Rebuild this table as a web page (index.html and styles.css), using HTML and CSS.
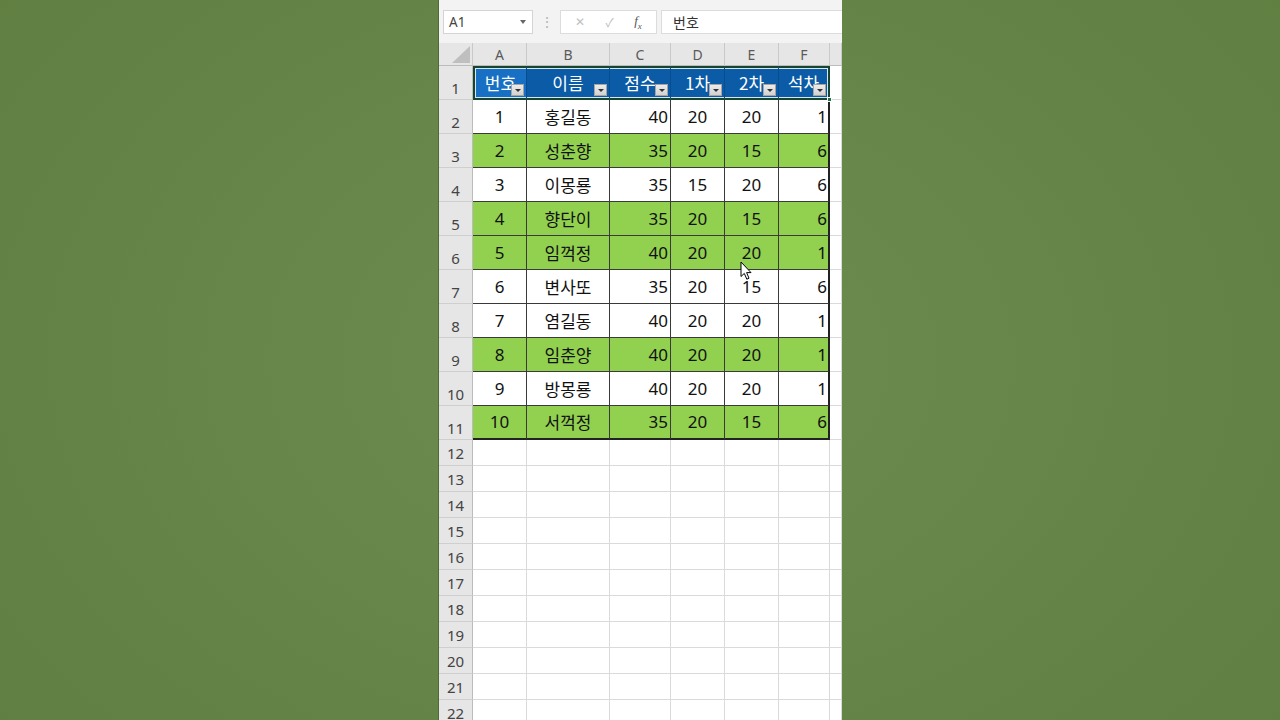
FILE: index.html
```html
<!DOCTYPE html>
<html lang="ko">
<head>
<meta charset="utf-8">
<title>Excel</title>
<link rel="stylesheet" href="styles.css">
</head>
<body>
<div class="panel">
  <div class="fbar">
    <div class="namebox"><span>A1</span><span class="nb-arrow"></span></div>
    <div class="vdots">⋮</div>
    <div class="fbtns">
      <span class="fb-x">✕</span>
      <span class="fb-ok">✓</span>
      <span class="fb-fx"><i>f</i><sub>x</sub></span>
    </div>
    <div class="finput">번호</div>
  </div>
  <div class="sheet">
    <table class="grid">
      <colgroup>
        <col class="w-rh"><col class="w-a"><col class="w-b"><col class="w-c"><col class="w-d"><col class="w-e"><col class="w-f"><col class="w-x">
      </colgroup>
      <thead>
        <tr class="r-colhead">
          <th class="corner"><span class="tri"></span></th>
          <th>A</th><th>B</th><th>C</th><th>D</th><th>E</th><th>F</th><th></th>
        </tr>
      </thead>
      <tbody>
        <tr class="r-big">
          <th class="rh">1</th>
          <td class="hd first act">번호<span class="flt"></span></td>
          <td class="hd">이름<span class="flt"></span></td>
          <td class="hd">점수<span class="flt"></span></td>
          <td class="hd">1차<span class="flt"></span></td>
          <td class="hd">2차<span class="flt"></span></td>
          <td class="hd last">석차<span class="flt"></span><span class="handle"></span></td>
          <td class="x"></td>
        </tr>
        <tr class="r-big">
          <th class="rh">2</th>
          <td class="d c">1</td><td class="d c">홍길동</td><td class="d r">40</td><td class="d c">20</td><td class="d c">20</td><td class="d r end">1</td><td class="x"></td>
        </tr>
        <tr class="r-big grn">
          <th class="rh">3</th>
          <td class="d c">2</td><td class="d c">성춘향</td><td class="d r">35</td><td class="d c">20</td><td class="d c">15</td><td class="d r end">6</td><td class="x"></td>
        </tr>
        <tr class="r-big">
          <th class="rh">4</th>
          <td class="d c">3</td><td class="d c">이몽룡</td><td class="d r">35</td><td class="d c">15</td><td class="d c">20</td><td class="d r end">6</td><td class="x"></td>
        </tr>
        <tr class="r-big grn">
          <th class="rh">5</th>
          <td class="d c">4</td><td class="d c">향단이</td><td class="d r">35</td><td class="d c">20</td><td class="d c">15</td><td class="d r end">6</td><td class="x"></td>
        </tr>
        <tr class="r-big grn">
          <th class="rh">6</th>
          <td class="d c">5</td><td class="d c">임꺽정</td><td class="d r">40</td><td class="d c">20</td><td class="d c">20</td><td class="d r end">1</td><td class="x"></td>
        </tr>
        <tr class="r-big">
          <th class="rh">7</th>
          <td class="d c">6</td><td class="d c">변사또</td><td class="d r">35</td><td class="d c">20</td><td class="d c">15</td><td class="d r end">6</td><td class="x"></td>
        </tr>
        <tr class="r-big">
          <th class="rh">8</th>
          <td class="d c">7</td><td class="d c">염길동</td><td class="d r">40</td><td class="d c">20</td><td class="d c">20</td><td class="d r end">1</td><td class="x"></td>
        </tr>
        <tr class="r-big grn">
          <th class="rh">9</th>
          <td class="d c">8</td><td class="d c">임춘양</td><td class="d r">40</td><td class="d c">20</td><td class="d c">20</td><td class="d r end">1</td><td class="x"></td>
        </tr>
        <tr class="r-big">
          <th class="rh">10</th>
          <td class="d c">9</td><td class="d c">방몽룡</td><td class="d r">40</td><td class="d c">20</td><td class="d c">20</td><td class="d r end">1</td><td class="x"></td>
        </tr>
        <tr class="r-big grn lastrow">
          <th class="rh">11</th>
          <td class="d c">10</td><td class="d c">서꺽정</td><td class="d r">35</td><td class="d c">20</td><td class="d c">15</td><td class="d r end">6</td><td class="x"></td>
        </tr>
        <tr class="r-sm"><th class="rh">12</th><td></td><td></td><td></td><td></td><td></td><td></td><td></td></tr>
        <tr class="r-sm"><th class="rh">13</th><td></td><td></td><td></td><td></td><td></td><td></td><td></td></tr>
        <tr class="r-sm"><th class="rh">14</th><td></td><td></td><td></td><td></td><td></td><td></td><td></td></tr>
        <tr class="r-sm"><th class="rh">15</th><td></td><td></td><td></td><td></td><td></td><td></td><td></td></tr>
        <tr class="r-sm"><th class="rh">16</th><td></td><td></td><td></td><td></td><td></td><td></td><td></td></tr>
        <tr class="r-sm"><th class="rh">17</th><td></td><td></td><td></td><td></td><td></td><td></td><td></td></tr>
        <tr class="r-sm"><th class="rh">18</th><td></td><td></td><td></td><td></td><td></td><td></td><td></td></tr>
        <tr class="r-sm"><th class="rh">19</th><td></td><td></td><td></td><td></td><td></td><td></td><td></td></tr>
        <tr class="r-sm"><th class="rh">20</th><td></td><td></td><td></td><td></td><td></td><td></td><td></td></tr>
        <tr class="r-sm"><th class="rh">21</th><td></td><td></td><td></td><td></td><td></td><td></td><td></td></tr>
        <tr class="r-sm"><th class="rh">22</th><td></td><td></td><td></td><td></td><td></td><td></td><td></td></tr>
      </tbody>
    </table>
    <svg class="cursor" width="13" height="20" viewBox="0 0 13 20">
      <path d="M1 1 L1 15.5 L4.3 12.4 L6.8 18.2 L9 17.2 L6.6 11.6 L11 11.6 Z" fill="#fff" stroke="#000" stroke-width="1" stroke-linejoin="round"/>
    </svg>
  </div>
</div>
</body>
</html>
```

FILE: styles.css
```css
* { box-sizing: border-box; }

html, body {
  margin: 0;
  padding: 0;
  height: 100%;
}

body {
  display: flex;
  justify-content: center;
  overflow: hidden;
  background: radial-gradient(ellipse 70% 90% at 50% 50%, #6c8c50 0%, #66864a 45%, #5f7e40 100%);
  font-family: "Noto Sans", "Noto Sans CJK KR", sans-serif;
}

.panel {
  width: 404px;
  height: 720px;
  background: #f3f3f3;
  overflow: hidden;
  border-left: 1px solid #4f6a37;
}

/* formula bar */
.fbar {
  height: 43px;
  display: flex;
  align-items: center;
  padding-left: 4px;
  background: #f3f3f3;
}

.namebox {
  width: 90px;
  height: 24px;
  background: #fff;
  border: 1px solid #d4d4d4;
  display: flex;
  align-items: center;
  justify-content: space-between;
  padding: 0 6px 0 5px;
  font-size: 13.5px;
  color: #444;
}

.nb-arrow {
  width: 0;
  height: 0;
  border-left: 3.5px solid transparent;
  border-right: 3.5px solid transparent;
  border-top: 4px solid #666;
}

.vdots {
  width: 27px;
  text-align: center;
  color: #b5b5b5;
  font-size: 14px;
}

.fbtns {
  width: 97px;
  height: 24px;
  background: #fff;
  border: 1px solid #dcdcdc;
  display: flex;
  align-items: center;
  justify-content: space-around;
  padding: 0 4px;
  color: #c0c0c0;
  font-size: 12px;
}

.fb-fx {
  color: #555;
  font-family: "Liberation Serif", serif;
  font-size: 13px;
}

.fb-fx sub {
  font-size: 9px;
  font-style: italic;
}

.finput {
  flex: 1;
  height: 24px;
  margin-left: 4px;
  background: #fff;
  border: 1px solid #dcdcdc;
  border-right: none;
  display: flex;
  align-items: center;
  padding-left: 11px;
  font-size: 14px;
  color: #333;
  font-family: "Noto Sans CJK KR", sans-serif;
}

/* sheet */
.sheet {
  position: relative;
  background: #fff;
}

.grid {
  table-layout: fixed;
  width: 403px;
  border-collapse: separate;
  border-spacing: 0;
}

.w-rh { width: 34px; }
.w-a { width: 54px; }
.w-b { width: 83px; }
.w-c { width: 61px; }
.w-d { width: 54px; }
.w-e { width: 54px; }
.w-f { width: 51px; }
.w-x { width: 12px; }

.grid th,
.grid td {
  padding: 0;
  border-right: 1px solid #dadada;
  border-bottom: 1px solid #dadada;
  overflow: hidden;
  white-space: nowrap;
}

.r-colhead { height: 23px; }

.r-colhead th {
  background: #e6e6e6;
  border-right: 1px solid #c9c9c9;
  border-bottom: 1px solid #bcbcbc;
  color: #5a5a5a;
  font-weight: normal;
  font-size: 14px;
  text-align: center;
  vertical-align: middle;
}

.corner {
  position: relative;
}

.tri {
  position: absolute;
  right: 2px;
  bottom: 2px;
  width: 0;
  height: 0;
  border-left: 18px solid transparent;
  border-bottom: 17px solid #bfbfbf;
}

.r-big { height: 34px; }
.r-sm { height: 26px; }

th.rh {
  background: #e6e6e6;
  border-right: 1px solid #bcbcbc;
  border-bottom: 1px solid #cfcfcf;
  color: #444;
  font-weight: normal;
  font-size: 15px;
  text-align: center;
  vertical-align: bottom;
  padding-bottom: 1px;
}

.r-sm th.rh {
  vertical-align: middle;
  padding-bottom: 0;
}

/* table header row */
td.hd {
  position: relative;
  background: #0c5ba6;
  color: #fff;
  font-family: "Noto Sans CJK KR", sans-serif;
  font-size: 17px;
  text-align: center;
  vertical-align: middle;
  border-top: 2px solid #17442f;
  border-bottom: 2px solid #17442f;
  border-right: 1px solid #0a4d8c;
  box-shadow: inset 0 1px 0 #d7e6f2, inset 0 -1px 0 #d7e6f2;
  padding-bottom: 2px;
}

td.hd.act { background: #1770c3; }
td.hd.first { border-left: 2px solid #17442f; box-shadow: inset 1px 1px 0 #d7e6f2, inset 0 -1px 0 #d7e6f2; }
td.hd.last { border-right: 2px solid #17442f; box-shadow: inset -1px 1px 0 #d7e6f2, inset 0 -1px 0 #d7e6f2; overflow: visible; }

.flt {
  position: absolute;
  right: 2px;
  bottom: 2px;
  width: 13px;
  height: 12px;
  background: linear-gradient(#ececec, #d2d2d2);
  border: 1px solid #a5a5a5;
}

.flt::after {
  content: "";
  position: absolute;
  left: 3px;
  top: 4px;
  border-left: 3px solid transparent;
  border-right: 3px solid transparent;
  border-top: 3px solid #333;
}

.handle {
  position: absolute;
  right: -4px;
  bottom: -4px;
  width: 5px;
  height: 5px;
  background: #217346;
  border: 1px solid #fff;
}

/* data rows */
td.d {
  background: #fff;
  color: #111;
  font-size: 17px;
  vertical-align: middle;
  border-right: 1px solid #3a3a3a;
  border-bottom: 1px solid #3a3a3a;
  padding-bottom: 1px;
}

.grn td.d { background: #92d050; }

td.c { text-align: center; }
td.r { text-align: right; padding-right: 2px; }
td.end { border-right: 2px solid #222; padding-right: 1px; }

.lastrow td.d { border-bottom: 2px solid #222; }

td.x { background: #fff; }

.cursor {
  position: absolute;
  left: 301px;
  top: 218px;
}
```
